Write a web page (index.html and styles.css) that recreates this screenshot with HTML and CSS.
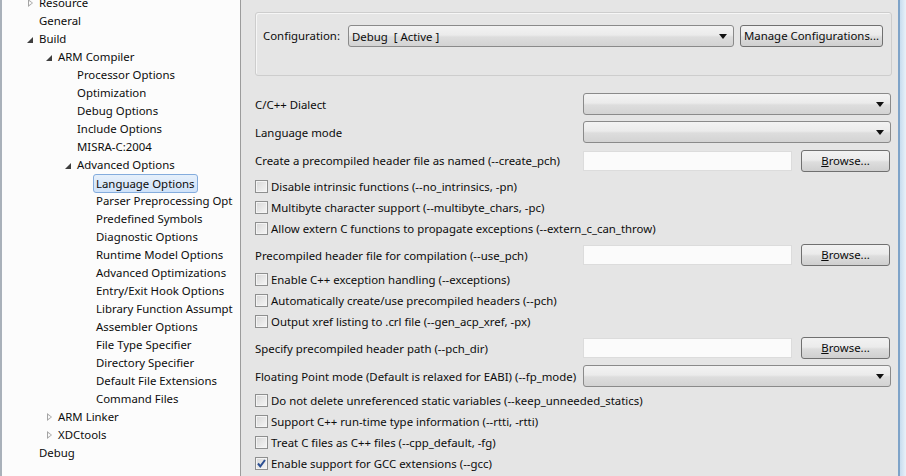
FILE: index.html
```html
<!doctype html>
<html>
<head>
    <meta charset="UTF-8">
    <link rel="stylesheet" href="styles.css">
</head>
<body>
<div class="window">
    <div class="tree">
        <div class="tree-clip">
            <div class="node lvl-1"><span class="tw closed"></span>Resource</div>
            <div class="node lvl-1"><span class="tw"></span>General</div>
            <div class="node lvl-1"><span class="tw open"></span>Build</div>
            <div class="node lvl-2"><span class="tw open"></span>ARM Compiler</div>
            <div class="node lvl-3"><span class="tw"></span>Processor Options</div>
            <div class="node lvl-3"><span class="tw"></span>Optimization</div>
            <div class="node lvl-3"><span class="tw"></span>Debug Options</div>
            <div class="node lvl-3"><span class="tw"></span>Include Options</div>
            <div class="node lvl-3"><span class="tw"></span>MISRA-C:2004</div>
            <div class="node lvl-3"><span class="tw open"></span>Advanced Options</div>
            <div class="node lvl-4"><span class="tw"></span><span class="sel">Language Options</span></div>
            <div class="node lvl-4"><span class="tw"></span>Parser Preprocessing Options</div>
            <div class="node lvl-4"><span class="tw"></span>Predefined Symbols</div>
            <div class="node lvl-4"><span class="tw"></span>Diagnostic Options</div>
            <div class="node lvl-4"><span class="tw"></span>Runtime Model Options</div>
            <div class="node lvl-4"><span class="tw"></span>Advanced Optimizations</div>
            <div class="node lvl-4"><span class="tw"></span>Entry/Exit Hook Options</div>
            <div class="node lvl-4"><span class="tw"></span>Library Function Assumptions</div>
            <div class="node lvl-4"><span class="tw"></span>Assembler Options</div>
            <div class="node lvl-4"><span class="tw"></span>File Type Specifier</div>
            <div class="node lvl-4"><span class="tw"></span>Directory Specifier</div>
            <div class="node lvl-4"><span class="tw"></span>Default File Extensions</div>
            <div class="node lvl-4"><span class="tw"></span>Command Files</div>
            <div class="node lvl-2"><span class="tw closed"></span>ARM Linker</div>
            <div class="node lvl-2"><span class="tw closed"></span>XDCtools</div>
            <div class="node lvl-1"><span class="tw"></span>Debug</div>
        </div>
    </div>

    <div class="page">
        <div class="group">
            <span class="config-label">Configuration:</span>
            <div class="combo config-combo"><span>Debug&nbsp; [ Active ]</span><i class="arrow"></i></div>
            <div class="btn manage-btn">Manage Configurations...</div>
        </div>

        <div class="opts">
            <div class="row">
                <span>C/C++ Dialect</span>
                <div class="combo"><span></span><i class="arrow"></i></div>
            </div>
            <div class="row">
                <span>Language mode</span>
                <div class="combo"><span></span><i class="arrow"></i></div>
            </div>
            <div class="row tall">
                <span>Create a precompiled header file as named (--create_pch)</span>
                <div class="field"><div class="input"></div><div class="btn browse"><u>B</u>rowse...</div></div>
            </div>
            <div class="check first"><i class="box"></i>Disable intrinsic functions (--no_intrinsics, -pn)</div>
            <div class="check"><i class="box"></i>Multibyte character support (--multibyte_chars, -pc)</div>
            <div class="check"><i class="box"></i>Allow extern C functions to propagate exceptions (--extern_c_can_throw)</div>
            <div class="row after-check">
                <span>Precompiled header file for compilation (--use_pch)</span>
                <div class="field"><div class="input"></div><div class="btn browse"><u>B</u>rowse...</div></div>
            </div>
            <div class="check"><i class="box"></i>Enable C++ exception handling (--exceptions)</div>
            <div class="check"><i class="box"></i>Automatically create/use precompiled headers (--pch)</div>
            <div class="check"><i class="box"></i>Output xref listing to .crl file (--gen_acp_xref, -px)</div>
            <div class="row after-check">
                <span>Specify precompiled header path (--pch_dir)</span>
                <div class="field"><div class="input"></div><div class="btn browse"><u>B</u>rowse...</div></div>
            </div>
            <div class="row">
                <span>Floating Point mode (Default is relaxed for EABI) (--fp_mode)</span>
                <div class="combo"><span></span><i class="arrow"></i></div>
            </div>
            <div class="check"><i class="box"></i>Do not delete unreferenced static variables (--keep_unneeded_statics)</div>
            <div class="check"><i class="box"></i>Support C++ run-time type information (--rtti, -rtti)</div>
            <div class="check"><i class="box"></i>Treat C files as C++ files (--cpp_default, -fg)</div>
            <div class="check"><i class="box checked"><svg width="13" height="13" viewBox="0 0 13 13"><path d="M3 6.5 L5.3 9.3 L10 3" fill="none" stroke="#2b4f93" stroke-width="2"/></svg></i>Enable support for GCC extensions (--gcc)</div>
        </div>
    </div>

    <div class="frame"></div>
</div>
</body>
</html>
```

FILE: styles.css
```css
body {
    margin: 0;
    font-family: "Noto Sans", "Open Sans", sans-serif;
    font-size: 11.4px;
    color: #0c0c0c;
    background-color: #e5e5e5;
}

.window {
    display: flex;
    width: 906px;
    height: 476px;
    overflow: hidden;
}

/* tree on the left */
.tree {
    width: 238px;
    flex: none;
    background-color: #fcfcfc;
    border-left: 2px solid #a9b1ba;
    border-right: 1px solid #9c9c9c;
    overflow: hidden;
}

.tree-clip {
    width: 231px;
    overflow: hidden;
    margin-top: -6px;
}

.node {
    height: 18px;
    line-height: 18px;
    white-space: nowrap;
    display: flex;
    align-items: center;
}

.lvl-1 { padding-left: 23px; }
.lvl-2 { padding-left: 42px; }
.lvl-3 { padding-left: 61px; }
.lvl-4 { padding-left: 80px; }

.tw {
    width: 14px;
    height: 18px;
    flex: none;
    position: relative;
}

.tw.open::before {
    content: "";
    position: absolute;
    left: 2px;
    top: 7px;
    border-style: solid;
    border-width: 0 0 6px 6px;
    border-color: transparent transparent #3f3f3f transparent;
}

.tw.closed::before {
    content: "";
    position: absolute;
    left: 3px;
    top: 5px;
    border-style: solid;
    border-width: 4.5px 0 4.5px 5.5px;
    border-color: transparent transparent transparent #a4a4a4;
}

.tw.closed::after {
    content: "";
    position: absolute;
    left: 4px;
    top: 7px;
    border-style: solid;
    border-width: 2.5px 0 2.5px 3px;
    border-color: transparent transparent transparent #fcfcfc;
}

.sel {
    margin-left: -3px;
    padding: 0 2px;
    height: 17px;
    line-height: 17px;
    border: 1px solid #84acdd;
    border-radius: 3px;
    background: linear-gradient(#e6f0fb, #cfe2f9);
}

/* right page */
.page {
    flex: 1;
    padding: 12px 4px 0 14px;
}

.group {
    border: 1px solid #cdcdcd;
    border-radius: 3px;
    box-shadow: inset 1px 1px 0 #f6f6f6;
    display: flex;
    align-items: flex-start;
    padding: 12px 8px 0 7px;
    height: 50px;
    margin-right: 2px;
}

.config-label {
    line-height: 22px;
    width: 85px;
}

.config-combo {
    width: 386px;
    margin-right: 6px;
}

.combo {
    border: 1px solid #8a8a8a;
    border-radius: 3px;
    background: linear-gradient(#f3f3f3 0%, #ebebeb 45%, #dddddd 55%, #d3d3d3 100%);
    display: flex;
    align-items: center;
    justify-content: space-between;
    padding: 0 6px 0 3px;
    box-sizing: border-box;
    height: 22px;
}

.arrow {
    width: 0;
    height: 0;
    border-style: solid;
    border-width: 5px 4px 0 4px;
    border-color: #111 transparent transparent transparent;
}

.btn {
    height: 22px;
    line-height: 20px;
    box-sizing: border-box;
    border: 1px solid #707070;
    border-radius: 3px;
    background: linear-gradient(#f2f2f2 0%, #ebebeb 45%, #dddddd 55%, #cfcfcf 100%);
    text-align: center;
    white-space: nowrap;
}

.manage-btn {
    width: 143px;
}

.opts {
    margin-top: 14px;
}

.row {
    height: 28px;
    display: grid;
    grid-template-columns: 328px 308px;
    align-items: center;
    white-space: nowrap;
}

.row.tall {
    height: 29px;
}

.row.after-check {
    margin-top: 2px;
}

.field {
    display: flex;
    align-items: center;
}

.input {
    width: 209px;
    height: 20px;
    box-sizing: border-box;
    border: 1px solid #dcdcdc;
    background-color: #fbfbfb;
    margin-right: 9px;
}

.browse {
    width: 89px;
}

.check {
    height: 21px;
    display: flex;
    align-items: center;
    white-space: nowrap;
}

.check.first {
    margin-top: 1px;
}

.box {
    width: 13px;
    height: 13px;
    box-sizing: border-box;
    border: 1px solid #8e8f8f;
    background: linear-gradient(135deg, #d7d7d7, #f6f6f6);
    box-shadow: inset 0 0 0 1px #f4f4f4;
    margin-right: 3px;
    flex: none;
    position: relative;
}

.box svg {
    position: absolute;
    left: -1px;
    top: -1px;
}

.frame {
    width: 7px;
    flex: none;
    border-left: 2px solid #7ea3c8;
    background: linear-gradient(90deg, #c8dcef, #eef4fa);
}
```
